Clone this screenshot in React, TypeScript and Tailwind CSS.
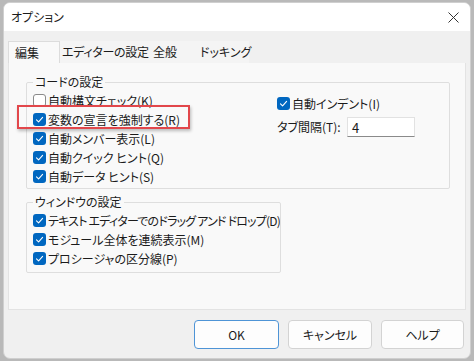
const font = { fontFamily: '"Noto Sans CJK JP", "Noto Sans", sans-serif' };

const Check = ({ checked }: { checked: boolean }) =>
  checked ? (
    <span className="flex h-[13px] w-[13px] shrink-0 items-center justify-center rounded-[3px] bg-[#0067c0]">
      <svg width="9" height="9" viewBox="0 0 9 9" fill="none">
        <path d="M1.5 4.8 L3.6 6.8 L7.6 2.3" stroke="white" strokeWidth="1.1" strokeLinecap="round" strokeLinejoin="round" />
      </svg>
    </span>
  ) : (
    <span className="h-[13px] w-[13px] shrink-0 rounded-[3px] border border-[#8a8a8a] bg-white" />
  );

const Row = ({ checked, label, highlight, tight }: { checked: boolean; label: string; highlight?: boolean; tight?: boolean }) => (
  <div className="relative flex h-[19px] items-center gap-[2px]">
    <Check checked={checked} />
    <span className={tight ? "whitespace-pre tracking-[-0.8px]" : "whitespace-nowrap"}>{label}</span>
    {highlight && (
      <span className="absolute -left-[16px] -top-[5px] h-[24px] w-[173px] border-2 border-[#e2474b] shadow-[1px_2px_3px_rgba(0,0,0,0.25)]" />
    )}
  </div>
);

export default function App() {
  return (
    <div
      className="h-[361px] w-[474px] bg-[#b9b9b9] px-[3px] pb-[2px] pt-[2px] text-[12px] leading-none text-[#1b1b1b] [font-feature-settings:'palt']"
      style={font}
    >
      <div className="flex h-[357px] flex-col overflow-hidden rounded-[7px] border border-[#cfcfcf] bg-[#f0f0f0]">
        {/* title bar */}
        <div className="flex h-[28px] shrink-0 items-center justify-between bg-white pl-[7px] pr-[11px]">
          <span className="text-[12px]">オプション</span>
          <svg width="11" height="11" viewBox="0 0 11 11">
            <path d="M0.5 0.5 L10.5 10.5 M10.5 0.5 L0.5 10.5" stroke="#333" strokeWidth="1" />
          </svg>
        </div>

        <div className="flex flex-1 flex-col px-[4px] pt-[10px]">
          {/* tabs */}
          <div className="flex h-[22px] items-stretch whitespace-nowrap">
            <div className="flex w-[52px] shrink-0 items-center border border-b-0 border-[#dcdcdc] bg-[#f9f9f9] pl-[6px]">編集</div>
            <div className="flex items-stretch bg-[#f4f4f4]">
              <div className="flex w-[90px] shrink-0 items-center overflow-hidden pl-[2px] tracking-[-0.3px]">エディターの設定</div>
              <div className="flex w-[46px] shrink-0 items-center pl-[3px]">全般</div>
              <div className="flex w-[53px] shrink-0 items-center pl-[4px]">ドッキング</div>
            </div>
          </div>

          {/* tab panel */}
          <div className="flex h-[247px] flex-col border border-t-0 border-[#e3e3e3] bg-[#f9f9f9] pl-[17px] pr-[15px] pt-[11px]">
            <fieldset className="h-[115px] min-w-0 rounded-[2px] border border-[#dedede] pl-[6px]">
              <legend className="px-[2px] leading-[16px]">コードの設定</legend>
              <div className="flex pt-[1px]">
                <div className="flex w-[244px] flex-col">
                  <Row checked={false} label="自動構文チェック(K)" />
                  <Row checked label="変数の宣言を強制する(R)" highlight />
                  <Row checked label="自動メンバー表示(L)" />
                  <Row checked label="自動クイック ヒント(Q)" />
                  <Row checked label="自動データ ヒント(S)" />
                </div>
                <div className="flex flex-col pt-[3px]">
                  <Row checked label="自動インデント(I)" />
                  <div className="mt-[4px] flex items-center">
                    <span className="w-[70px] whitespace-nowrap">タブ間隔(T):</span>
                    <div className="flex h-[20px] w-[68px] items-center border border-[#e2e2e2] border-b-[#8a8a8a] bg-white pl-[4px] text-[13px]">4</div>
                  </div>
                </div>
              </div>
            </fieldset>

            <fieldset className="mt-[5px] h-[79px] w-[255px] min-w-0 overflow-hidden rounded-[2px] border border-[#dedede] pl-[6px]">
              <legend className="px-[2px] leading-[16px]">ウィンドウの設定</legend>
              <div className="flex flex-col pt-[1px]">
                <Row checked label="テキスト エディターでのドラッグ アンド ドロップ(D)" tight />
                <Row checked label="モジュール全体を連続表示(M)" />
                <Row checked label="プロシージャの区分線(P)" />
              </div>
            </fieldset>
          </div>

          {/* buttons */}
          <div className="flex justify-end gap-[9px] pr-[2px] pt-[10px]">
            <button className="h-[29px] w-[85px] rounded-[4px] border border-[#4e94d6] bg-[#fdfdfd] text-[12px]">OK</button>
            <button className="h-[29px] w-[84px] rounded-[4px] border border-[#d3d3d3] bg-[#fdfdfd] text-[12px]">キャンセル</button>
            <button className="h-[29px] w-[83px] rounded-[4px] border border-[#d3d3d3] bg-[#fdfdfd] text-[12px]">ヘルプ</button>
          </div>
        </div>
      </div>
    </div>
  );
}
